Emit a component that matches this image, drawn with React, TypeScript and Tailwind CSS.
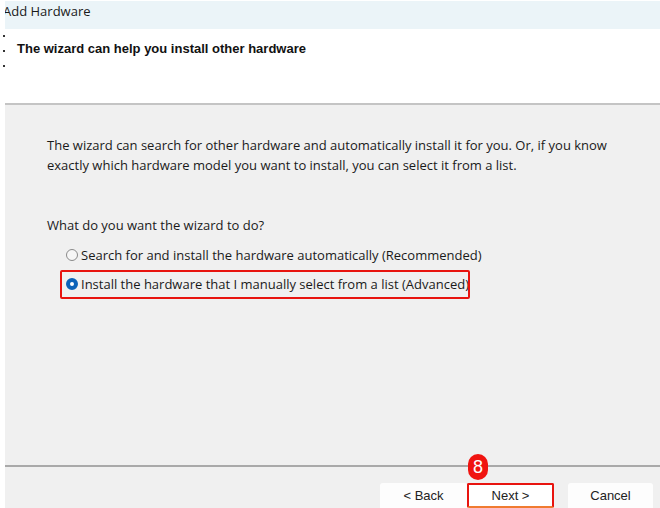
export default function App() {
  return (
    <div className="relative w-[660px] h-[508px] overflow-hidden bg-white pl-[5px] flex flex-col text-[#1a1a1a] [font-family:'Open_Sans','Noto_Sans',sans-serif]">
      <div className="mt-[1px] h-[28px] shrink-0 bg-[#ebf4f8] flex items-center overflow-hidden">
        <span className="text-[13px] ml-[-2px] leading-none pb-[7px] whitespace-nowrap">Add Hardware</span>
      </div>
      <div className="h-[74px] shrink-0 bg-white pl-[12px] pt-[12px] relative">
        <p className="text-[13px] font-bold leading-[16px] text-[#111] [font-family:'Liberation_Sans',sans-serif]">The wizard can help you install other hardware</p>
        <div className="absolute left-[-2px] top-[6px] flex flex-col gap-[13px]">
          <i className="block w-[2px] h-[2px] bg-[#333]" />
          <i className="block w-[2px] h-[2px] bg-[#333]" />
          <i className="block w-[2px] h-[2px] bg-[#333]" />
        </div>
      </div>
      <div className="h-[2px] shrink-0 bg-[#c4c4c4]" />
      <div className="flex-1 bg-[#f0f0f0] flex flex-col">
        <div className="pl-[42px] pt-[30px]">
          <p className="text-[13px] leading-[20px] whitespace-nowrap">
            The wizard can search for other hardware and automatically install it for you. Or, if you know<br />
            exactly which hardware model you want to install, you can select it from a list.
          </p>
          <p className="text-[13px] leading-[20px] mt-[40px]">What do you want the wizard to do?</p>
          <div className="mt-[10px] ml-[19px] flex items-center gap-[3px] h-[20px]">
            <span className="w-[12px] h-[12px] rounded-full border border-[#8a8a8a] bg-[#f6f6f6] shrink-0" />
            <span className="text-[13px] leading-[20px] whitespace-nowrap">Search for and install the hardware automatically (Recommended)</span>
          </div>
          <div className="mt-[9px] ml-[19px] flex items-center gap-[3px] h-[20px]">
            <span className="w-[12px] h-[12px] rounded-full bg-white border-[4px] border-[#0b62b8] shrink-0" />
            <span className="text-[13px] leading-[20px] whitespace-nowrap">Install the hardware that I manually select from a list (Advanced)</span>
          </div>
        </div>
        <div className="mt-auto h-[2px] bg-[#a9a9a9]" />
        <div className="h-[41px] flex justify-end pt-[16px] pr-[7px]">
          <button className="w-[87px] h-[25px] bg-[#fdfdfd] rounded-t-[3px] text-[13px] text-[#222] [font-family:'Liberation_Sans',sans-serif]">&lt; Back</button>
          <button className="w-[87px] h-[25px] bg-white border-2 border-[#e8140f] border-b-[#f07b30] rounded-[2px] text-[13px] text-[#222] [font-family:'Liberation_Sans',sans-serif]">Next &gt;</button>
          <button className="ml-[14px] w-[85px] h-[25px] bg-[#fdfdfd] rounded-t-[3px] text-[13px] text-[#222] [font-family:'Liberation_Sans',sans-serif]">Cancel</button>
        </div>
      </div>
      <div className="absolute left-[60px] top-[270px] w-[410px] h-[29px] border-2 border-[#e8140f] rounded-[2px]" />
      <div className="absolute left-[468px] top-[454px] w-[20px] h-[26px] rounded-full bg-[#f01410] text-white flex items-center justify-center text-[18px] leading-none [font-family:'Liberation_Sans',sans-serif]">8</div>
    </div>
  );
}
